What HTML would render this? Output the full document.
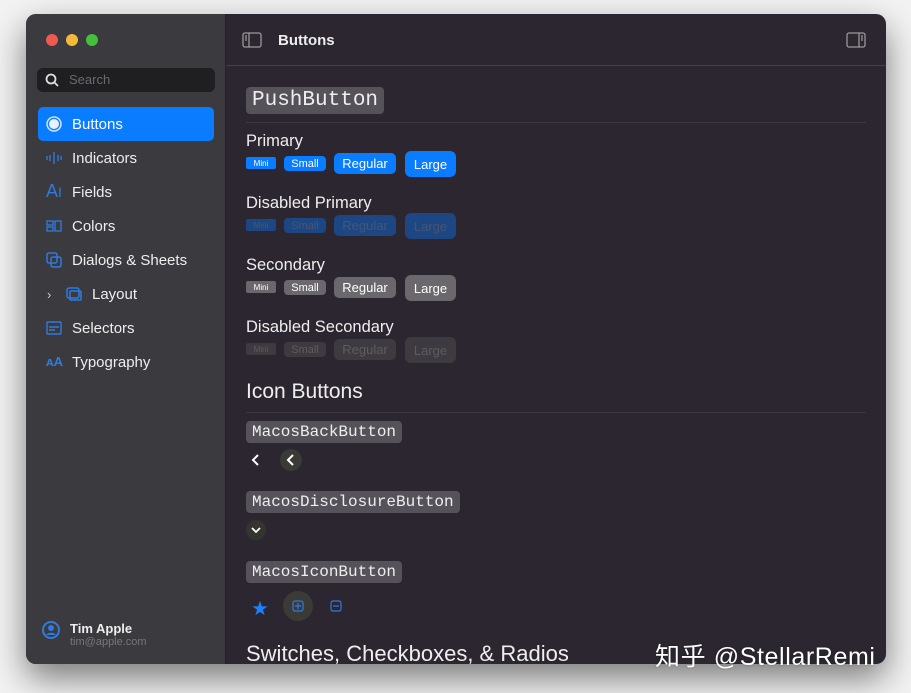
<!DOCTYPE html><html><head><meta charset="utf-8"><style>
*{box-sizing:border-box;margin:0;padding:0}
body{width:911px;height:693px;background:#f3f3f3;font-family:"Liberation Sans","Noto Sans CJK SC",sans-serif;position:relative;overflow:hidden}
.win{position:absolute;left:26px;top:14px;width:860px;height:650px;border-radius:10px;overflow:hidden;background:#2b2630;box-shadow:0 14px 34px rgba(0,0,0,.5)}
.side{position:absolute;left:0;top:0;width:200px;height:650px;background:#3b3a3e;border-right:1px solid #222}
.dot{position:absolute;top:20px;width:12px;height:12px;border-radius:50%}
.search{position:absolute;left:11px;top:54px;width:178px;height:24px;background:#1f1e21;border-radius:6px;color:#6b6a6e;font-size:13px;padding:4px 0 0 32px}
.item{position:absolute;left:12px;width:176px;height:34px;color:#eee;font-size:15px;line-height:35px;padding-left:34px}
.item .ic{position:absolute;left:8px;top:9px;width:16px;height:16px;color:#2f7be0}
.sel{background:#0a7cff;border-radius:5px;color:#fff}
.main{position:absolute;left:200px;top:0;right:0;height:650px}
.bar{height:52px;border-bottom:1px solid #433f48;color:#eee;font-size:15px;font-weight:bold}
.mono{font-family:"Liberation Mono","DejaVu Sans Mono",monospace;background:#55525a;color:#eee;border-radius:4px;display:inline-block;padding:0 6px;position:absolute;left:20px}
.h{position:absolute;left:20px;color:#eee;font-size:16.5px}
.btn{position:absolute;border-radius:4px;color:#fff;text-align:center}
.hr{position:absolute;left:20px;right:20px;height:1px;background:#3c3842}
</style></head><body>
<div class="win">
<div class="side">
<div class="dot" style="left:20px;background:#ee5a52"></div>
<div class="dot" style="left:40px;background:#f4b93b"></div>
<div class="dot" style="left:60px;background:#43c03c"></div>
<div class="search"><svg style="position:absolute;left:8px;top:5px" width="14" height="14" viewBox="0 0 14 14"><circle cx="6" cy="6" r="4.5" stroke="#ddd" stroke-width="1.8" fill="none"/><path d="M9.5 9.5L13 13" stroke="#ddd" stroke-width="1.8"/></svg>Search</div>
<div class="item sel" style="top:93px"><svg class="ic" viewBox="0 0 16 16"><circle cx="8" cy="8" r="7" fill="none" stroke="#cfe3ff" stroke-width="1.5"/><circle cx="8" cy="8" r="5" fill="#e8f1ff"/></svg>Buttons</div>
<div class="item" style="top:127px"><svg class="ic" viewBox="0 0 16 16" stroke="#2f7be0" stroke-width="1.4"><path d="M1 6v4M4 5v6M8 2v12M12 5v6M15 6v4"/></svg>Indicators</div>
<div class="item" style="top:161px"><span class="ic" style="font-size:18px;line-height:16px;top:8px">A<span style="font-size:14px">I</span></span>Fields</div>
<div class="item" style="top:195px"><svg class="ic" viewBox="0 0 16 16" fill="none" stroke="#2f7be0" stroke-width="1.3"><rect x="1" y="3" width="6" height="4"/><rect x="1" y="9" width="6" height="4"/><rect x="9" y="3" width="6" height="10"/></svg>Colors</div>
<div class="item" style="top:229px"><svg class="ic" viewBox="0 0 16 16" fill="none" stroke="#2f7be0" stroke-width="1.5"><rect x="1" y="1" width="10" height="10" rx="2"/><rect x="5" y="5" width="10" height="10" rx="2"/></svg>Dialogs &amp; Sheets</div>
<div class="item" style="top:263px;padding-left:54px"><span style="position:absolute;left:9px;color:#ccc;font-size:13px">&#x203A;</span><svg class="ic" style="left:28px" viewBox="0 0 16 16" fill="none" stroke="#2f7be0" stroke-width="1.5"><rect x="1" y="2" width="12" height="10" rx="2"/><rect x="4" y="5" width="11" height="9" rx="1"/></svg>Layout</div>
<div class="item" style="top:297px"><svg class="ic" viewBox="0 0 16 16" fill="none" stroke="#2f7be0" stroke-width="1.4"><rect x="1" y="2" width="14" height="12" rx="1"/><path d="M3 7h10M3 10h6" /></svg>Selectors</div>
<div class="item" style="top:331px"><span class="ic" style="font-size:13px;line-height:16px;font-weight:bold">ᴀA</span>Typography</div>
<svg style="position:absolute;left:16px;top:607px" width="18" height="18" viewBox="0 0 18 18"><circle cx="9" cy="9" r="8" fill="none" stroke="#2f7be0" stroke-width="2"/><circle cx="9" cy="7" r="3" fill="#2f7be0"/><path d="M4 14c2-3 8-3 10 0" fill="#2f7be0"/></svg>
<div style="position:absolute;left:44px;top:607px;color:#eee;font-size:13px;font-weight:bold">Tim Apple</div>
<div style="position:absolute;left:44px;top:622px;color:#77767a;font-size:11px">tim@apple.com</div>
</div>
<div class="main">
<div class="bar"><svg style="position:absolute;left:16px;top:18px" width="20" height="16" viewBox="0 0 20 16" fill="none" stroke="#999" stroke-width="1.3"><rect x="1" y="1" width="18" height="14" rx="2"/><path d="M7 1v14M3 4h2M3 6h2M3 8h2"/></svg><span style="position:absolute;left:52px;top:18px">Buttons</span>
<svg style="position:absolute;left:620px;top:18px" width="20" height="16" viewBox="0 0 20 16" fill="none" stroke="#999" stroke-width="1.3"><rect x="1" y="1" width="18" height="14" rx="2"/><path d="M13 1v14M15 4h2M15 6h2M15 8h2"/></svg></div>
<div class="mono" style="top:73px;font-size:21px;height:27px;line-height:27px">PushButton</div>
<div class="hr" style="top:108px"></div>
<div class="h" style="top:118px">Primary</div>
<div class="btn" style="left:20px;top:143px;width:30px;height:12px;font-size:8px;line-height:13px;background:#0a7cff;border-radius:2px">Mini</div>
<div class="btn" style="left:58px;top:142px;width:42px;height:15px;font-size:11px;line-height:16px;background:#0a7cff">Small</div>
<div class="btn" style="left:108px;top:139px;width:62px;height:21px;font-size:13px;line-height:21px;background:#0a7cff;border-radius:5px">Regular</div>
<div class="btn" style="left:179px;top:137px;width:51px;height:26px;font-size:13px;line-height:27px;background:#0a7cff;border-radius:6px">Large</div>
<div class="h" style="top:180px">Disabled Primary</div>
<div style="opacity:.45;position:absolute;left:0;top:62px;width:300px;height:300px">
<div class="btn" style="left:20px;top:143px;width:30px;height:12px;font-size:8px;line-height:13px;background:#0a6fe6;border-radius:2px;color:#6a8fc8">Mini</div>
<div class="btn" style="left:58px;top:142px;width:42px;height:15px;font-size:11px;line-height:16px;background:#0a6fe6;color:#6a8fc8">Small</div>
<div class="btn" style="left:108px;top:139px;width:62px;height:21px;font-size:13px;line-height:21px;background:#0a6fe6;border-radius:5px;color:#6a8fc8">Regular</div>
<div class="btn" style="left:179px;top:137px;width:51px;height:26px;font-size:13px;line-height:27px;background:#0a6fe6;border-radius:6px;color:#6a8fc8">Large</div></div>
<div class="h" style="top:242px">Secondary</div>
<div class="btn" style="left:20px;top:267px;width:30px;height:12px;font-size:8px;line-height:13px;background:#6a686d;border-radius:2px">Mini</div>
<div class="btn" style="left:58px;top:266px;width:42px;height:15px;font-size:11px;line-height:16px;background:#6a686d">Small</div>
<div class="btn" style="left:108px;top:263px;width:62px;height:21px;font-size:13px;line-height:21px;background:#6a686d;border-radius:5px">Regular</div>
<div class="btn" style="left:179px;top:261px;width:51px;height:26px;font-size:13px;line-height:27px;background:#6a686d;border-radius:6px">Large</div>
<div class="h" style="top:304px">Disabled Secondary</div>
<div class="btn" style="left:20px;top:329px;width:30px;height:12px;font-size:8px;line-height:13px;background:#3d3a40;border-radius:2px;color:#5e5c62">Mini</div>
<div class="btn" style="left:58px;top:328px;width:42px;height:15px;font-size:11px;line-height:16px;background:#3d3a40;color:#5e5c62">Small</div>
<div class="btn" style="left:108px;top:325px;width:62px;height:21px;font-size:13px;line-height:21px;background:#3d3a40;border-radius:5px;color:#5e5c62">Regular</div>
<div class="btn" style="left:179px;top:323px;width:51px;height:26px;font-size:13px;line-height:27px;background:#3d3a40;border-radius:6px;color:#5e5c62">Large</div>
<div class="h" style="top:366px;font-size:21px">Icon Buttons</div>
<div class="hr" style="top:398px"></div>
<div class="mono" style="top:407px;font-size:16px;height:22px;line-height:22px">MacosBackButton</div>
<svg style="position:absolute;left:24px;top:439px" width="12" height="14" viewBox="0 0 12 14"><path d="M8 2L3 7l5 5" stroke="#fff" stroke-width="2" fill="none"/></svg>
<div style="position:absolute;left:54px;top:435px;width:22px;height:22px;border-radius:50%;background:#3a3a37"></div>
<svg style="position:absolute;left:59px;top:439px" width="12" height="14" viewBox="0 0 12 14"><path d="M8 2L3 7l5 5" stroke="#fff" stroke-width="2" fill="none"/></svg>
<div class="mono" style="top:477px;font-size:16px;height:22px;line-height:22px">MacosDisclosureButton</div>
<div style="position:absolute;left:20px;top:506px;width:20px;height:20px;border-radius:50%;background:#35352f"></div>
<svg style="position:absolute;left:25px;top:512px" width="10" height="8" viewBox="0 0 10 8"><path d="M1 2l4 4 4-4" stroke="#fff" stroke-width="1.8" fill="none"/></svg>
<div class="mono" style="top:547px;font-size:16px;height:22px;line-height:22px">MacosIconButton</div>
<div style="position:absolute;left:26px;top:581px;color:#1a82ff;font-size:16px">★</div>
<div style="position:absolute;left:57px;top:577px;width:30px;height:30px;border-radius:50%;background:#3b3a36"></div>
<svg style="position:absolute;left:66px;top:586px" width="12" height="12" viewBox="0 0 12 12" fill="none" stroke="#2f7be0" stroke-width="1.2"><rect x="1" y="1" width="10" height="10" rx="2"/><path d="M3 6h6M6 3v6"/></svg>
<svg style="position:absolute;left:104px;top:586px" width="12" height="12" viewBox="0 0 12 12" fill="none" stroke="#2f7be0" stroke-width="1.2"><rect x="1" y="1" width="10" height="10" rx="2"/><path d="M3 6h6"/></svg>
<div class="h" style="top:627px;font-size:22px">Switches, Checkboxes, &amp; Radios</div>
</div>
</div>
<div style="position:absolute;left:655px;top:637px;color:#fff;font-size:25px;letter-spacing:0.6px;white-space:nowrap;text-shadow:0 0 2px rgba(0,0,0,.3)">知乎 @StellarRemi</div>
</body></html>
